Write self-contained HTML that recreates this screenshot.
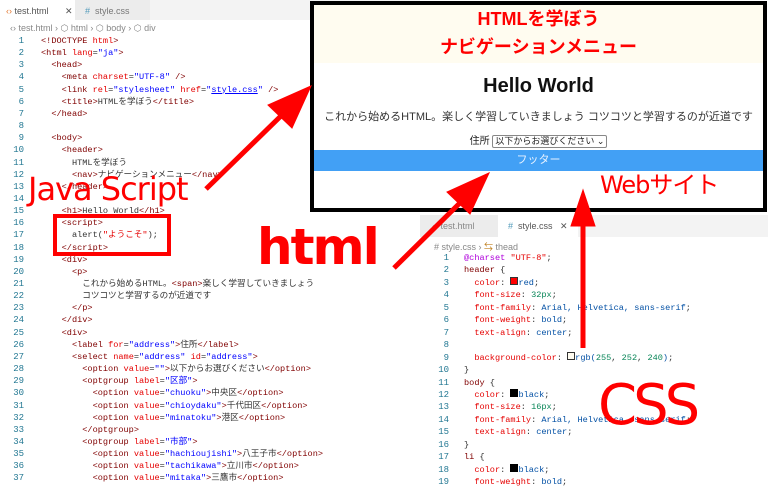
<!DOCTYPE html>
<html><head><meta charset="utf-8"><style>
*{margin:0;padding:0;box-sizing:border-box}
body{width:768px;height:480px;overflow:hidden;background:#fff;position:relative;font-family:"Liberation Sans","Noto Sans CJK JP",sans-serif}
.abs{position:absolute}
.code{font-family:"Liberation Mono","Noto Sans CJK JP",monospace;font-size:8.6px;line-height:12px;height:12px;white-space:pre;color:#333}
.ln{position:absolute;width:24px;text-align:right;color:#237893;font-family:"Liberation Mono",monospace;font-size:9px;line-height:12px}
.t{color:#800000}.a{color:#e50000}.s{color:#0000ff}.v{color:#0451a5}.n{color:#098658}.p{color:#af00db}
</style></head><body>
<div class="abs" style="left:0;top:0;width:420px;height:20px;background:#f3f3f3"></div>
<div class="abs" style="left:0;top:0;width:75px;height:20px;background:#fff;font-size:9px;color:#555;padding:6px 0 0 6px"><span style="color:#e37933">‹›</span> test.html <span style="margin-left:14px">✕</span></div>
<div class="abs" style="left:75px;top:0;width:75px;height:20px;background:#ececec;font-size:9px;color:#777;padding:6px 0 0 10px"><span style="color:#519aba">#</span>&nbsp; style.css</div>
<div class="abs" style="left:10px;top:23px;font-size:9px;color:#888">‹› test.html › ⬡ html › ⬡ body › ⬡ div</div>
<div id="left"></div>
<div class="abs" style="left:420px;top:213px;width:348px;height:267px;background:#fff"></div>
<div class="abs" style="left:420px;top:215px;width:348px;height:22px;background:#f3f3f3"></div>
<div class="abs" style="left:420px;top:215px;width:78px;height:22px;background:#ececec;font-size:9px;color:#888;padding:6px 0 0 12px">‹› test.html</div>
<div class="abs" style="left:498px;top:215px;width:80px;height:22px;background:#fff;font-size:9px;color:#555;padding:6px 0 0 10px"><span style="color:#519aba">#</span>&nbsp; style.css &nbsp;&nbsp;✕</div>
<div class="abs" style="left:434px;top:240px;font-size:9px;color:#888"># style.css › <span style="color:#c08020">⇆</span> thead</div>
<div id="right"></div>
<div class="abs" style="left:310px;top:1px;width:457px;height:211px;border:4px solid #000;background:#fff;overflow:hidden">
 <div style="height:58px;background:rgb(255,252,240);color:#f00;font-weight:bold;font-size:18px;text-align:center;line-height:28px;padding-top:0">HTMLを学ぼう<br>ナビゲーションメニュー</div>
 <div style="text-align:center;font-weight:bold;font-size:20px;color:#111;margin-top:12px">Hello World</div>
 <div style="text-align:center;font-size:11px;color:#333;margin-top:10px">これから始めるHTML。楽しく学習していきましょう コツコツと学習するのが近道です</div>
 <div style="text-align:center;font-size:10px;color:#222;margin-top:11px;line-height:14px">住所 <span style="display:inline-block;border:1px solid #888;border-radius:2px;padding:0 2px;font-size:9px;line-height:11px">以下からお選びください ⌄</span></div>
 <div style="background:#42a0f5;color:#e8f2ff;text-align:center;font-size:11px;height:21px;line-height:21px;margin-top:1px">フッター</div>
</div>
<div class="abs" style="left:28px;top:170px;font-size:32px;color:#f00;font-family:'DejaVu Sans',sans-serif;letter-spacing:-1px">Java Script</div>
<div class="abs" style="left:53px;top:214px;width:118px;height:42px;border:4px solid #f00"></div>
<div class="abs" style="left:257px;top:218px;font-size:50px;color:#f00;font-weight:bold;font-family:'DejaVu Sans',sans-serif;letter-spacing:-2px">html</div>
<div class="abs" style="left:598px;top:373px;font-size:56px;color:#f00;font-family:'DejaVu Sans',sans-serif;letter-spacing:-4px">CSS</div>
<div class="abs" style="left:600px;top:165px;font-size:24px;color:#f00;font-family:'DejaVu Sans',sans-serif;letter-spacing:-1px">Webサイト</div>
<svg class="abs" style="left:0;top:0" width="768" height="480">
<g stroke="#f00" stroke-width="5" fill="#f00">
<line x1="206" y1="189" x2="285" y2="112"/>
<polygon points="311,86 268,105 292,128" stroke-width="1"/>
<line x1="394" y1="268" x2="470" y2="193"/>
<polygon points="489,173 447,192 470,214" stroke-width="1"/>
<line x1="583" y1="348" x2="583" y2="222"/>
<polygon points="583,190 571,226 595,226" stroke-width="1"/>
</g></svg>
<script>
var L=[
'<span class="t">&lt;!DOCTYPE</span> <span class="a">html</span><span class="t">&gt;</span>',
'<span class="t">&lt;html</span> <span class="a">lang</span>=<span class="s">"ja"</span><span class="t">&gt;</span>',
'  <span class="t">&lt;head&gt;</span>',
'    <span class="t">&lt;meta</span> <span class="a">charset</span>=<span class="s">"UTF-8"</span> <span class="t">/&gt;</span>',
'    <span class="t">&lt;link</span> <span class="a">rel</span>=<span class="s">"stylesheet"</span> <span class="a">href</span>=<span class="s">"<u>style.css</u>"</span> <span class="t">/&gt;</span>',
'    <span class="t">&lt;title&gt;</span>HTMLを学ぼう<span class="t">&lt;/title&gt;</span>',
'  <span class="t">&lt;/head&gt;</span>','',
'  <span class="t">&lt;body&gt;</span>',
'    <span class="t">&lt;header&gt;</span>',
'      HTMLを学ぼう',
'      <span class="t">&lt;nav&gt;</span>ナビゲーションメニュー<span class="t">&lt;/nav&gt;</span>',
'    <span class="t">&lt;/header&gt;</span>','',
'    <span class="t">&lt;h1&gt;</span>Hello World<span class="t">&lt;/h1&gt;</span>',
'    <span class="t">&lt;script&gt;</span>',
'      alert(<span class="a">"ようこそ"</span>);',
'    <span class="t">&lt;/script&gt;</span>',
'    <span class="t">&lt;div&gt;</span>',
'      <span class="t">&lt;p&gt;</span>',
'        これから始めるHTML。<span class="t">&lt;span&gt;</span>楽しく学習していきましょう',
'        コツコツと学習するのが近道です',
'      <span class="t">&lt;/p&gt;</span>',
'    <span class="t">&lt;/div&gt;</span>',
'    <span class="t">&lt;div&gt;</span>',
'      <span class="t">&lt;label</span> <span class="a">for</span>=<span class="s">"address"</span><span class="t">&gt;</span>住所<span class="t">&lt;/label&gt;</span>',
'      <span class="t">&lt;select</span> <span class="a">name</span>=<span class="s">"address"</span> <span class="a">id</span>=<span class="s">"address"</span><span class="t">&gt;</span>',
'        <span class="t">&lt;option</span> <span class="a">value</span>=<span class="s">""</span><span class="t">&gt;</span>以下からお選びください<span class="t">&lt;/option&gt;</span>',
'        <span class="t">&lt;optgroup</span> <span class="a">label</span>=<span class="s">"区部"</span><span class="t">&gt;</span>',
'          <span class="t">&lt;option</span> <span class="a">value</span>=<span class="s">"chuoku"</span><span class="t">&gt;</span>中央区<span class="t">&lt;/option&gt;</span>',
'          <span class="t">&lt;option</span> <span class="a">value</span>=<span class="s">"chioydaku"</span><span class="t">&gt;</span>千代田区<span class="t">&lt;/option&gt;</span>',
'          <span class="t">&lt;option</span> <span class="a">value</span>=<span class="s">"minatoku"</span><span class="t">&gt;</span>港区<span class="t">&lt;/option&gt;</span>',
'        <span class="t">&lt;/optgroup&gt;</span>',
'        <span class="t">&lt;optgroup</span> <span class="a">label</span>=<span class="s">"市部"</span><span class="t">&gt;</span>',
'          <span class="t">&lt;option</span> <span class="a">value</span>=<span class="s">"hachioujishi"</span><span class="t">&gt;</span>八王子市<span class="t">&lt;/option&gt;</span>',
'          <span class="t">&lt;option</span> <span class="a">value</span>=<span class="s">"tachikawa"</span><span class="t">&gt;</span>立川市<span class="t">&lt;/option&gt;</span>',
'          <span class="t">&lt;option</span> <span class="a">value</span>=<span class="s">"mitaka"</span><span class="t">&gt;</span>三鷹市<span class="t">&lt;/option&gt;</span>'];
var h='';
L.forEach(function(l,i){var y=35+i*12.15;h+='<div class="ln" style="left:0;top:'+y+'px">'+(i+1)+'</div><div class="abs code" style="left:41px;top:'+y+'px;width:379px;overflow:hidden">'+l+'</div>';});
document.getElementById('left').innerHTML=h;
var R=[
'<span class="p">@charset</span> <span class="a">"UTF-8"</span>;',
'<span class="t">header</span> {',
'  <span class="a">color</span>: <span style="display:inline-block;width:8px;height:8px;background:#f00;border:1px solid #333"></span><span class="v">red</span>;',
'  <span class="a">font-size</span>: <span class="n">32px</span>;',
'  <span class="a">font-family</span>: <span class="v">Arial, Helvetica, sans-serif</span>;',
'  <span class="a">font-weight</span>: <span class="v">bold</span>;',
'  <span class="a">text-align</span>: <span class="v">center</span>;','',
'  <span class="a">background-color</span>: <span style="display:inline-block;width:8px;height:8px;background:#fffcf0;border:1px solid #333"></span><span class="v">rgb(</span><span class="n">255</span>, <span class="n">252</span>, <span class="n">240</span><span class="v">)</span>;',
'}',
'<span class="t">body</span> {',
'  <span class="a">color</span>: <span style="display:inline-block;width:8px;height:8px;background:#000"></span><span class="v">black</span>;',
'  <span class="a">font-size</span>: <span class="n">16px</span>;',
'  <span class="a">font-family</span>: <span class="v">Arial, Helvetica, sans-serif</span>;',
'  <span class="a">text-align</span>: <span class="v">center</span>;',
'}',
'<span class="t">li</span> {',
'  <span class="a">color</span>: <span style="display:inline-block;width:8px;height:8px;background:#000"></span><span class="v">black</span>;',
'  <span class="a">font-weight</span>: <span class="v">bold</span>;'];
h='';
R.forEach(function(l,i){var y=252+i*12.45;h+='<div class="ln" style="left:425px;top:'+y+'px">'+(i+1)+'</div><div class="abs code" style="left:464px;top:'+y+'px">'+l+'</div>';});
document.getElementById('right').innerHTML=h;
</script>
</body></html>
